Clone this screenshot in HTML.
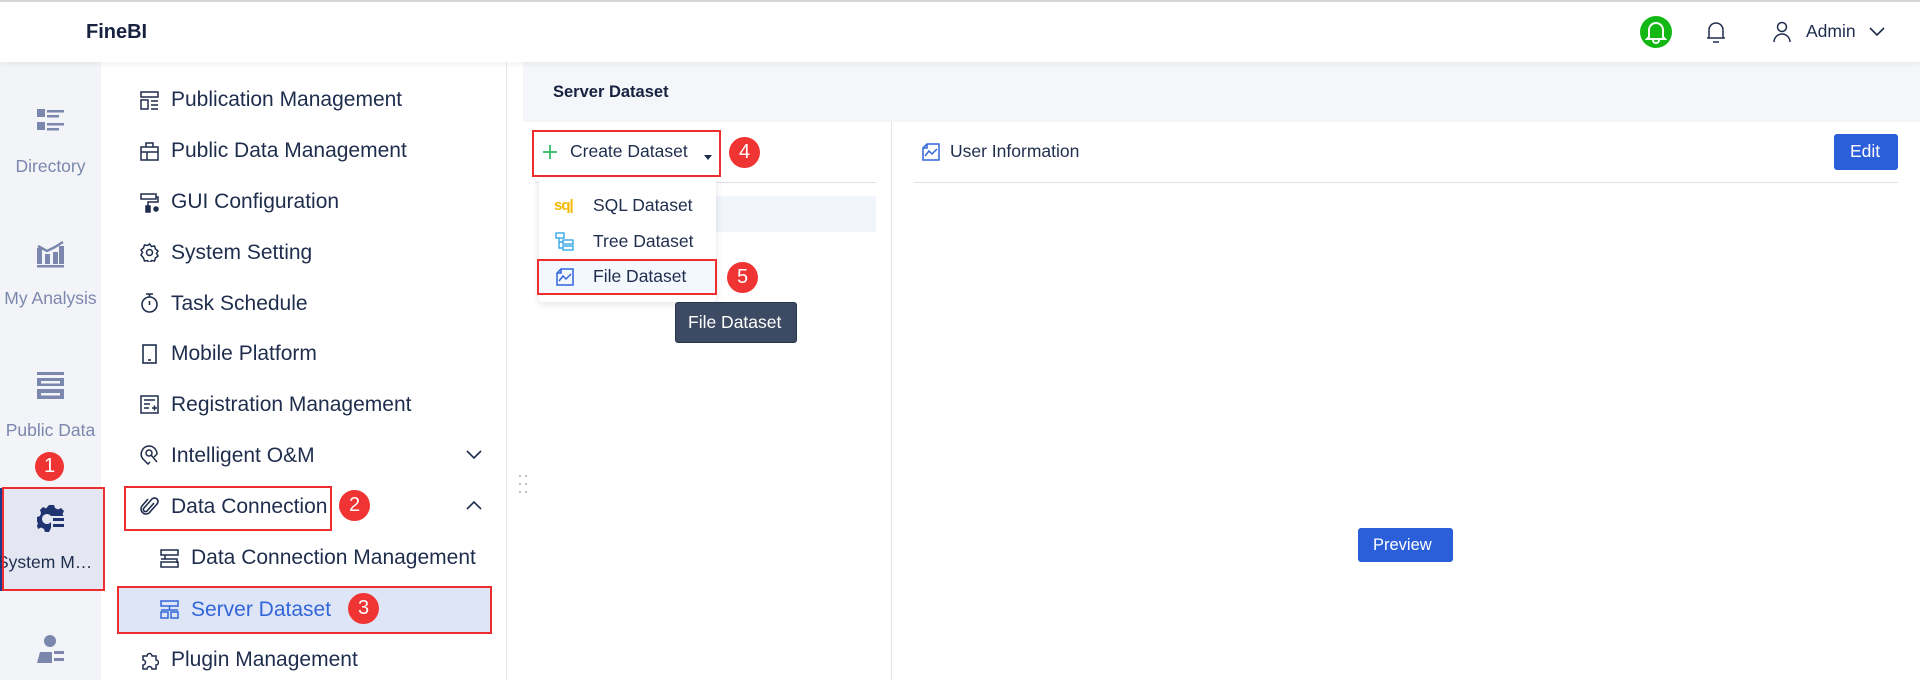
<!DOCTYPE html>
<html><head><meta charset="utf-8"><style>
*{margin:0;padding:0;box-sizing:border-box}
body{width:1920px;height:680px;position:relative;overflow:hidden;background:#fff;font-family:"Liberation Sans",sans-serif;color:#1f2d4d}
.a{position:absolute}
.t{position:absolute;white-space:nowrap;line-height:1}
.nav{font-size:21px;color:#1f2d4d}
.rl{font-size:17.5px;color:#7b87ad;width:101px;text-align:center;left:0}
.badge{position:absolute;width:31px;height:31px;border-radius:50%;background:#f03434;color:#fff;font-size:20px;text-align:center;line-height:31px}
.red{position:absolute;border:2px solid #ee2e2e}
svg{position:absolute}
</style></head><body>
<div class="a" style="left:0;top:0;width:1920px;height:2px;background:#d8d8d8"></div>
<div class="a" style="left:0;top:2px;width:1920px;height:60px;background:#fff;box-shadow:0 2px 6px rgba(0,0,0,.06);z-index:2"></div>
<div class="t" style="left:86px;top:22px;font-size:20px;font-weight:bold;color:#16223f;z-index:3">FineBI</div>
<div class="a" style="left:1640px;top:16px;width:32px;height:32px;border-radius:50%;background:#14b814;z-index:3"></div>
<svg style="left:1645px;top:20px;z-index:4" width="22" height="24" viewBox="0 0 22 24"><path d="M4 17V10a7 7 0 0 1 14 0v7l2 2H2z M8 20a3 3 0 0 0 6 0" fill="none" stroke="#fff" stroke-width="2"/></svg>
<svg style="left:1705px;top:20px;z-index:4" width="22" height="24" viewBox="0 0 22 24"><path d="M4 18V10a7 7 0 0 1 14 0v8zM2 18h18M8 22h6" fill="none" stroke="#1f2d4d" stroke-width="1.5"/></svg>
<svg style="left:1772px;top:21px;z-index:4" width="20" height="22" viewBox="0 0 20 22"><circle cx="10" cy="6" r="4.5" fill="none" stroke="#1f2d4d" stroke-width="1.5"/><path d="M2 21a8 8 0 0 1 16 0" fill="none" stroke="#1f2d4d" stroke-width="1.5"/></svg>
<div class="t" style="left:1806px;top:23px;font-size:17.5px;color:#1f2d4d;z-index:4">Admin</div>
<svg style="left:1868px;top:26px;z-index:4" width="18" height="12" viewBox="0 0 18 12"><path d="M2 2l7 7 7-7" fill="none" stroke="#1f2d4d" stroke-width="1.6"/></svg>

<!-- rail -->
<div class="a" style="left:0;top:62px;width:101px;height:618px;background:#f3f4f8"></div>
<svg style="left:37px;top:108px" width="28" height="26" viewBox="0 0 28 26"><g fill="#7b87ad"><rect x="0" y="1" width="8" height="8"/><rect x="10" y="2" width="17" height="2.5"/><rect x="10" y="7" width="12" height="2.5"/><rect x="0" y="14" width="8" height="8"/><rect x="10" y="15" width="17" height="2.5"/><rect x="10" y="20" width="12" height="2.5"/></g></svg>
<div class="t rl" style="top:158px">Directory</div>
<svg style="left:37px;top:240px" width="28" height="28" viewBox="0 0 28 28"><g fill="#7b87ad"><rect x="0" y="8" width="5" height="16"/><rect x="8" y="14" width="5" height="10"/><rect x="16" y="12" width="5" height="12"/><rect x="22" y="6" width="5" height="18"/><rect x="0" y="25" width="27" height="2.5"/><path d="M1 6l9 5 8-4 8-5" fill="none" stroke="#7b87ad" stroke-width="2.5"/></g></svg>
<div class="t rl" style="top:290px;left:0;width:101px">My Analysis</div>
<svg style="left:37px;top:372px" width="28" height="28" viewBox="0 0 28 28"><g fill="#7b87ad"><rect x="0" y="0" width="27" height="3"/><rect x="0" y="6" width="27" height="8"/><rect x="0" y="17" width="27" height="10"/></g><rect x="4" y="9" width="19" height="2.5" fill="#f3f4f8"/><rect x="4" y="21" width="19" height="2.5" fill="#f3f4f8"/></svg>
<div class="t rl" style="top:422px">Public Data</div>
<div class="badge" style="left:35px;top:452px;width:29px;height:29px;line-height:29px">1</div>
<div class="a" style="left:3px;top:488px;width:100px;height:103px;background:#e4e7f2"></div>
<div class="a" style="left:0;top:488px;width:3px;height:103px;background:#1f3a8c"></div>
<svg style="left:37px;top:503px" width="28" height="30" viewBox="0 0 28 30"><path d="M12 2h5l1 3 3 1.5 3-1.5 3 3-1.5 3 1 2H14a5 5 0 1 0 0 6v6l-2 4H8l-1-3-3-1.5-3 1.5-1-3 1-3L0 19 0 14l3-1 1-3-1-3 3-3 3 1.5z" fill="#1f3370"/><rect x="16" y="15" width="11" height="3" fill="#1f3370"/><rect x="16" y="21" width="11" height="3" fill="#1f3370"/></svg>
<div class="t" style="left:0;top:554px;font-size:17.5px;color:#1f2d4d;width:103px;overflow:hidden;text-indent:-3px">System M…</div>
<div class="red" style="left:2px;top:487px;width:103px;height:104px"></div>
<svg style="left:37px;top:634px" width="28" height="30" viewBox="0 0 28 30"><circle cx="13" cy="7" r="6" fill="#7b87ad"/><path d="M0 29l3-11h12v11z" fill="#7b87ad"/><rect x="17" y="17" width="10" height="3" fill="#7b87ad"/><rect x="17" y="24" width="10" height="3" fill="#7b87ad"/></svg>

<!-- nav -->
<div class="a" style="left:506px;top:62px;width:1px;height:618px;background:#e6e8ee"></div>
<svg style="left:140px;top:91px" width="19" height="19" viewBox="0 0 19 19" fill="none" stroke="#1f2d4d" stroke-width="1.5"><rect x="1" y="1" width="17" height="5"/><rect x="1" y="9" width="7" height="9"/><path d="M11 10h7M11 14h7M11 18h7"/></svg>
<div class="t nav" style="left:171px;top:89px">Publication Management</div>
<svg style="left:140px;top:142px" width="19" height="19" viewBox="0 0 19 19" fill="none" stroke="#1f2d4d" stroke-width="1.5"><rect x="1" y="5" width="17" height="13"/><path d="M6 5V1h7v4M1 10h17M7 10v8"/></svg>
<div class="t nav" style="left:171px;top:140px">Public Data Management</div>
<svg style="left:140px;top:193px" width="19" height="20" viewBox="0 0 19 20" fill="none" stroke="#1f2d4d" stroke-width="1.5"><rect x="1" y="1" width="15" height="5"/><path d="M16 4h2v5H8v4"/><rect x="6" y="13" width="4" height="6" fill="#1f2d4d"/><circle cx="16" cy="16" r="2" fill="#1f2d4d"/></svg>
<div class="t nav" style="left:171px;top:191px">GUI Configuration</div>
<svg style="left:140px;top:243px" width="19" height="19" viewBox="0 0 19 19" fill="none" stroke="#1f2d4d" stroke-width="1.5"><path d="M9.5 1l2 2.5 3-.5 1 3 2.5 2-1.5 2.5 1.5 2.5-2.5 2-1 3-3-.5-2 2.5-2-2.5-3 .5-1-3L1 12l1.5-2.5L1 7l2.5-2 1-3 3 .5z"/><circle cx="9.5" cy="9.5" r="3"/></svg>
<div class="t nav" style="left:171px;top:242px">System Setting</div>
<svg style="left:140px;top:293px" width="19" height="20" viewBox="0 0 19 20" fill="none" stroke="#1f2d4d" stroke-width="1.6"><circle cx="9.5" cy="11.5" r="7.5"/><path d="M6 1h7M9.5 1v3M9.5 8v4"/></svg>
<div class="t nav" style="left:171px;top:293px">Task Schedule</div>
<svg style="left:142px;top:344px" width="15" height="20" viewBox="0 0 15 20" fill="none" stroke="#1f2d4d" stroke-width="1.6"><rect x="1" y="1" width="13" height="18"/><path d="M6 16h3"/></svg>
<div class="t nav" style="left:171px;top:343px">Mobile Platform</div>
<svg style="left:140px;top:395px" width="19" height="19" viewBox="0 0 19 19" fill="none" stroke="#1f2d4d" stroke-width="1.5"><rect x="1" y="1" width="17" height="17"/><path d="M4 5h11M4 9h6M4 13h5M12 13h5M14.5 10.5v5"/></svg>
<div class="t nav" style="left:171px;top:394px">Registration Management</div>
<svg style="left:140px;top:445px" width="19" height="20" viewBox="0 0 19 20" fill="none" stroke="#1f2d4d" stroke-width="1.5"><path d="M9 1a8 8 0 0 0-6 13l5 5 2-2M9 1a8 8 0 0 1 8 8l-3 3"/><circle cx="9" cy="8" r="3"/><path d="M11 10l6 7"/></svg>
<div class="t nav" style="left:171px;top:445px">Intelligent O&amp;M</div>
<svg style="left:465px;top:449px" width="18" height="11" viewBox="0 0 18 11"><path d="M2 2l7 7 7-7" fill="none" stroke="#1f2d4d" stroke-width="1.6"/></svg>
<svg style="left:140px;top:496px" width="19" height="20" viewBox="0 0 19 20" fill="none" stroke="#1f2d4d" stroke-width="1.6"><path d="M14 7l-7 8a2 2 0 0 1-3-3l8-9a3.5 3.5 0 0 1 5 5l-8 9a5 5 0 0 1-7-7l6-7"/></svg>
<div class="t nav" style="left:171px;top:496px">Data Connection</div>
<div class="red" style="left:124px;top:486px;width:208px;height:45px"></div>
<div class="badge" style="left:339px;top:490px">2</div>
<svg style="left:465px;top:500px" width="18" height="11" viewBox="0 0 18 11"><path d="M2 9l7-7 7 7" fill="none" stroke="#1f2d4d" stroke-width="1.6"/></svg>
<svg style="left:160px;top:549px" width="19" height="19" viewBox="0 0 19 19" fill="none" stroke="#1f2d4d" stroke-width="1.5"><rect x="1" y="1" width="17" height="5"/><path d="M5 6v4h12v4M1 10h4"/><rect x="1" y="13" width="17" height="5"/></svg>
<div class="t nav" style="left:191px;top:547px">Data Connection Management</div>
<div class="a" style="left:117px;top:587px;width:374px;height:46px;background:#dde5f7"></div>
<div class="red" style="left:117px;top:586px;width:375px;height:48px"></div>
<svg style="left:160px;top:600px" width="19" height="19" viewBox="0 0 19 19" fill="none" stroke="#3366d9" stroke-width="1.5"><rect x="1" y="1" width="17" height="5"/><path d="M9.5 6v4M1 10h17"/><rect x="1" y="12" width="7" height="6"/><rect x="11" y="12" width="7" height="6"/></svg>
<div class="t nav" style="left:191px;top:599px;color:#3366d9">Server Dataset</div>
<div class="badge" style="left:348px;top:593px">3</div>
<svg style="left:140px;top:651px" width="19" height="19" viewBox="0 0 19 19" fill="none" stroke="#1f2d4d" stroke-width="1.5"><path d="M3 5h4a2.5 2.5 0 0 1 5 0h4v4a2.5 2.5 0 0 1 0 5v4h-4a2.5 2.5 0 0 0-5 0H3v-4a2.5 2.5 0 0 0 0-5z"/></svg>
<div class="t nav" style="left:171px;top:649px">Plugin Management</div>

<!-- splitter dots -->
<svg style="left:519px;top:475px" width="10" height="20" viewBox="0 0 10 20" fill="#b9bfcc"><rect x="0" y="0" width="2" height="2"/><rect x="6" y="0" width="2" height="2"/><rect x="0" y="8" width="2" height="2"/><rect x="6" y="8" width="2" height="2"/><rect x="0" y="16" width="2" height="2"/><rect x="6" y="16" width="2" height="2"/></svg>

<!-- main -->
<div class="a" style="left:523px;top:62px;width:1397px;height:60px;background:#f5f6fa"></div>
<div class="t" style="left:553px;top:84px;font-size:16.5px;font-weight:bold;color:#16223f">Server Dataset</div>
<div class="a" style="left:891px;top:122px;width:1px;height:558px;background:#e3e5eb"></div>
<div class="a" style="left:535px;top:182px;width:341px;height:1px;background:#dfe2ea"></div>
<div class="a" style="left:713px;top:196px;width:163px;height:36px;background:#f2f5fb"></div>
<svg style="left:542px;top:144px" width="16" height="16" viewBox="0 0 16 16"><path d="M8 1v14M1 8h14" stroke="#33bb66" stroke-width="1.8"/></svg>
<div class="t" style="left:570px;top:143px;font-size:17.5px;color:#1f2d4d">Create Dataset</div>
<svg style="left:704px;top:155px" width="8" height="6" viewBox="0 0 8 6"><path d="M0 0h8L4 5z" fill="#1f2d4d"/></svg>
<div class="red" style="left:532px;top:130px;width:189px;height:47px"></div>
<div class="badge" style="left:729px;top:137px">4</div>

<div class="a" style="left:539px;top:179px;width:177px;height:123px;background:#fff;border-radius:4px;box-shadow:0 2px 8px rgba(0,0,0,.12)"></div>
<div class="t" style="left:554px;top:198px;font-size:15px;color:#f5b800;font-weight:bold;letter-spacing:-1px">sq|</div>
<div class="t" style="left:593px;top:197px;font-size:17.5px;color:#1f2d4d">SQL Dataset</div>
<svg style="left:555px;top:232px" width="20" height="20" viewBox="0 0 20 20" fill="none" stroke="#35a8e6" stroke-width="1.4"><rect x="1" y="1" width="8" height="5"/><path d="M4 6v10h4M4 10h4"/><rect x="8" y="8" width="10" height="4"/><rect x="8" y="14" width="10" height="4"/></svg>
<div class="t" style="left:593px;top:233px;font-size:17.5px;color:#1f2d4d">Tree Dataset</div>
<div class="a" style="left:539px;top:260px;width:177px;height:34px;background:#f3f7fe"></div>
<svg style="left:556px;top:268px" width="18" height="18" viewBox="0 0 18 18" fill="none" stroke="#3366d9" stroke-width="1.5"><path d="M5 1h12v16H1V5z M5 1v4H1"/><path d="M3 13l4-5 3 3 5-5"/></svg>
<div class="t" style="left:593px;top:268px;font-size:17.5px;color:#1f2d4d">File Dataset</div>
<div class="red" style="left:537px;top:259px;width:180px;height:36px"></div>
<div class="badge" style="left:727px;top:262px">5</div>
<div class="a" style="left:675px;top:302px;width:122px;height:41px;background:#3d4a63;border-radius:3px;border:1px solid #2c364a"></div>
<div class="t" style="left:688px;top:314px;font-size:17.5px;color:#fff">File Dataset</div>

<svg style="left:922px;top:143px" width="18" height="18" viewBox="0 0 18 18" fill="none" stroke="#3366d9" stroke-width="1.5"><path d="M5 1h12v16H1V5z M5 1v4H1"/><path d="M3 13l4-5 3 3 5-5"/></svg>
<div class="t" style="left:950px;top:143px;font-size:17.5px;color:#1f2d4d">User Information</div>
<div class="a" style="left:1834px;top:134px;width:64px;height:36px;background:#2b5fd9;border-radius:3px"></div>
<div class="t" style="left:1850px;top:143px;font-size:17.5px;color:#fff">Edit</div>
<div class="a" style="left:914px;top:182px;width:984px;height:1px;background:#dfe2ea"></div>
<div class="a" style="left:1358px;top:528px;width:95px;height:34px;background:#2b5fd9;border-radius:3px"></div>
<div class="t" style="left:1373px;top:537px;font-size:16.5px;color:#fff">Preview</div>
</body></html>
